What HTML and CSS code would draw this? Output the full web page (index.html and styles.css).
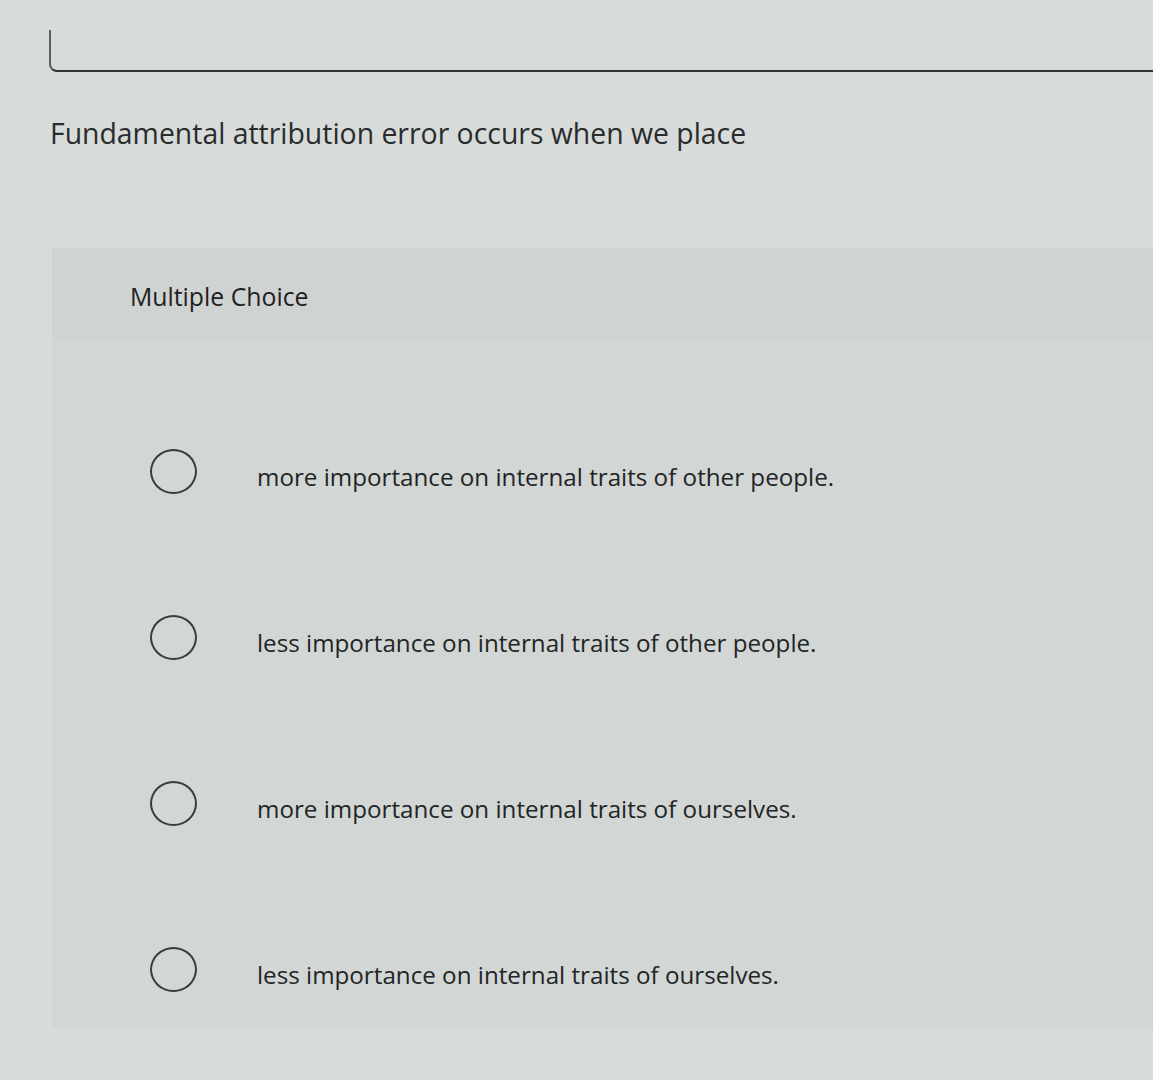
FILE: index.html
```html
<!DOCTYPE html>
<html>
<head>
<meta charset="utf-8">
<link rel="stylesheet" href="styles.css">
</head>
<body>
<div class="page">
  <div class="topbox"></div>
  <p class="question">Fundamental attribution error occurs when we place</p>
  <div class="panel">
    <div class="panel-head">Multiple Choice</div>
    <div class="options">
      <label class="option"><span class="radio"></span><span class="opt-text">more importance on internal traits of other people.</span></label>
      <label class="option"><span class="radio"></span><span class="opt-text">less importance on internal traits of other people.</span></label>
      <label class="option"><span class="radio"></span><span class="opt-text">more importance on internal traits of ourselves.</span></label>
      <label class="option"><span class="radio"></span><span class="opt-text">less importance on internal traits of ourselves.</span></label>
    </div>
  </div>
</div>
</body>
</html>
```
FILE: styles.css
```css
html, body {
  margin: 0;
  padding: 0;
  background: #d7dbda;
}
body {
  font-family: "Open Sans", Lato, "Liberation Sans", sans-serif;
  color: #262828;
  width: 1153px;
  height: 1080px;
  overflow: hidden;
}
.page {
  display: flex;
  flex-direction: column;
}
.topbox {
  margin: 30px 0 0 49px;
  height: 40px;
  border-left: 2px solid #5a5e5e;
  border-bottom: 2px solid #2f3333;
  border-bottom-left-radius: 8px;
}
.question {
  margin: 43px 0 0 50px;
  font-size: 28.4px;
  line-height: 36px;
  color: #2a2c2c;
}
.panel {
  margin: 97px 0 0 52px;
  background: #d2d6d5;
  display: flex;
  flex-direction: column;
}
.panel-head {
  height: 92px;
  display: flex;
  align-items: center;
  padding-left: 78px;
  padding-top: 4px;
  box-sizing: border-box;
  font-size: 24.8px;
  color: #1f2121;
  background: #cfd3d2;
}
.options {
  display: flex;
  flex-direction: column;
  gap: 121px;
  padding: 109px 0 36px 0;
}
.option {
  height: 45px;
  display: flex;
  align-items: center;
  padding-left: 98px;
}
.radio {
  width: 43px;
  height: 41px;
  border: 2px solid #3a3c3c;
  border-radius: 50%;
  flex: none;
}
.opt-text {
  margin-left: 60px;
  margin-top: 10px;
  font-size: 24.2px;
  white-space: nowrap;
  color: #232525;
}
```
